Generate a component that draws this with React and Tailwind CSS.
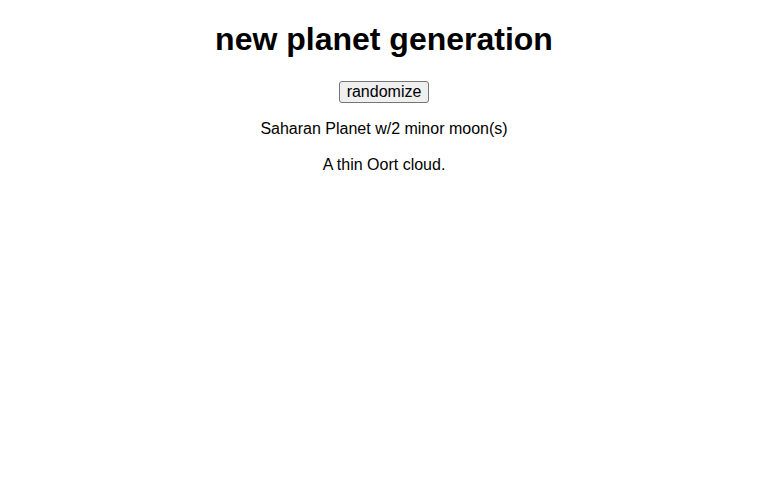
export default function App() {
  return (
    <div className="text-center text-black bg-white min-h-[480px]" style={{ fontFamily: '"Liberation Sans", Arial, sans-serif' }}>
      <h1 className="text-[32px] leading-[normal] font-bold pt-[21.44px] mb-[21.44px]">new planet generation</h1>
      <div>
        <button className="text-[16px] leading-[normal] px-[7px] py-[1px] border border-[#767676] rounded-[3px] bg-[#efefef] text-black">
          randomize
        </button>
      </div>
      <p className="text-[16px] leading-[normal] mt-4">Saharan Planet w/2 minor moon(s)</p>
      <p className="text-[16px] leading-[normal] mt-[18px] mb-4">A thin Oort cloud.</p>
    </div>
  );
}
